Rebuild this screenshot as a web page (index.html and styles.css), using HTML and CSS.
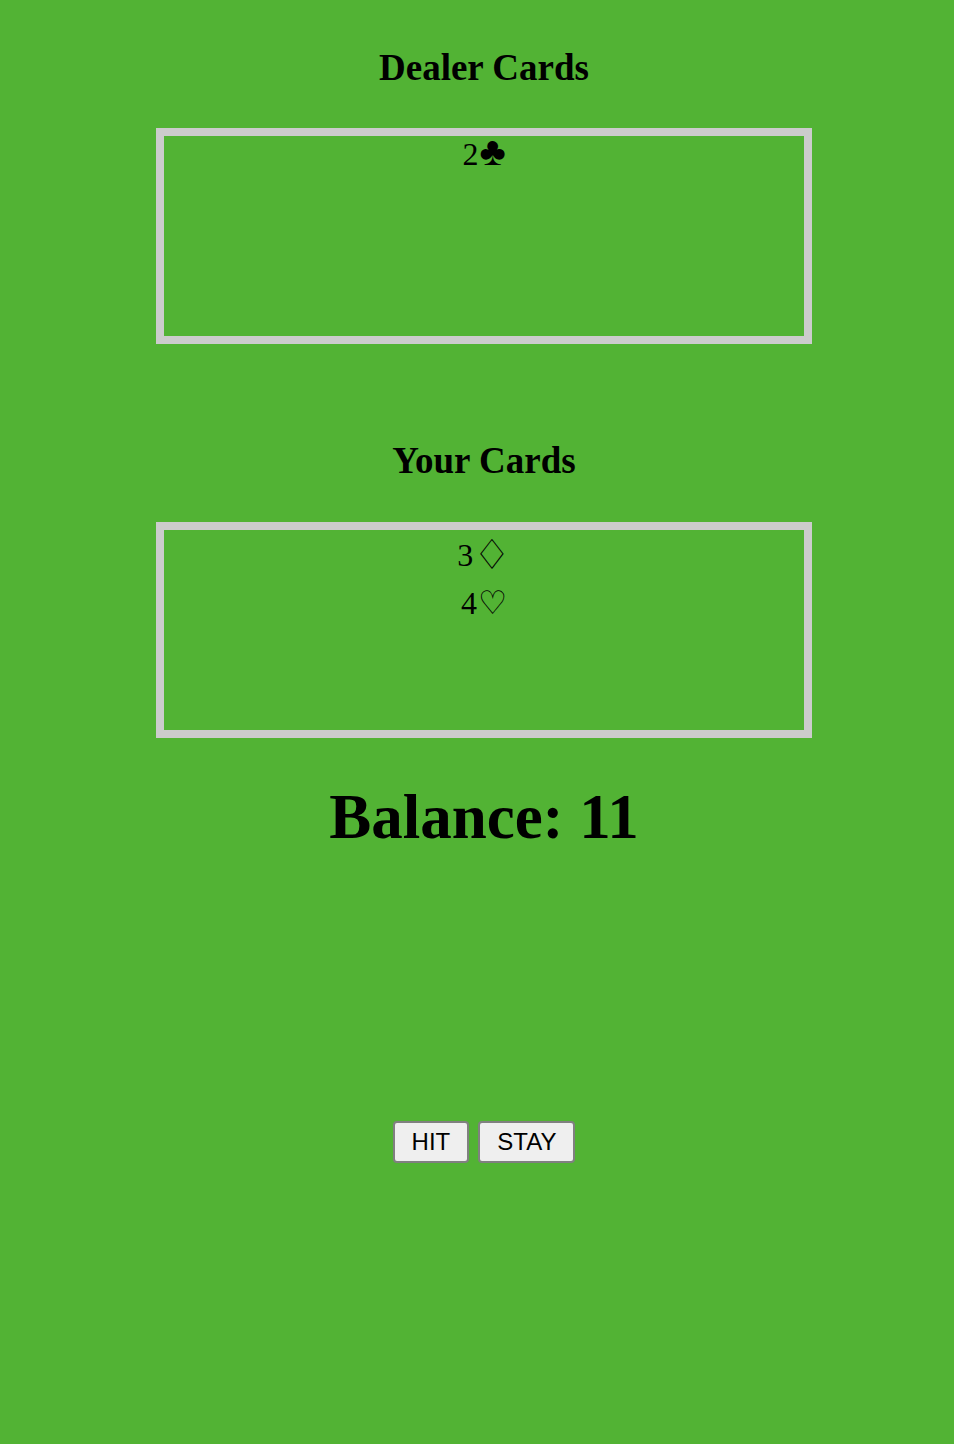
FILE: index.html
```
<!DOCTYPE html>
<html lang="en">
<head>
<meta charset="utf-8">
<title>Blackjack</title>
<link rel="stylesheet" href="styles.css">
</head>
<body>
<main class="table">
  <h2 class="title">Dealer Cards</h2>
  <div class="hand">
    <div class="card">2<span class="suit suit-club">♣</span></div>
  </div>
  <h2 class="title title-player">Your Cards</h2>
  <div class="hand hand-player">
    <div class="card">3<span class="suit suit-diamond">♢</span></div>
    <div class="card">4<span class="suit suit-heart">♡</span></div>
  </div>
  <h1 class="balance">Balance: 11</h1>
  <div class="controls">
    <button class="btn" type="button">HIT</button>
    <button class="btn" type="button">STAY</button>
  </div>
</main>
</body>
</html>
```
FILE: styles.css
```
html, body {
  margin: 0;
  padding: 0;
  background: #52b334;
}

body {
  min-height: 1444px;
  font-family: "Liberation Serif", "DejaVu Serif", serif;
  color: #000;
}

.table {
  padding: 48px 0 0 14px;
  text-align: center;
}

.title {
  margin: 0 0 40px;
  font-size: 37px;
  line-height: 40px;
  font-weight: bold;
}

.title-player {
  margin-bottom: 41px;
}

.hand {
  box-sizing: border-box;
  width: 656px;
  height: 216px;
  margin: 0 auto 97px;
  border: 8px solid #cccccc;
}

.hand-player {
  margin-bottom: 44px;
  padding-top: 7px;
}

.card {
  font-size: 32px;
  line-height: 37px;
  margin-bottom: 11px;
}

.suit {
  display: inline-block;
  line-height: 0;
  margin-left: 1px;
}

.suit-club {
  font-size: 1.25em;
}

.suit-diamond {
  font-family: "DejaVu Sans", sans-serif;
  font-size: 1.3em;
  margin-left: 0;
  vertical-align: -3px;
}

.suit-heart {
  font-family: "DejaVu Sans", sans-serif;
  font-size: 1.02em;
}

.balance {
  margin: 0 0 269px;
  font-size: 63px;
  line-height: 70px;
  font-weight: bold;
}

.controls {
  display: flex;
  justify-content: center;
  gap: 9px;
}

.btn {
  box-sizing: border-box;
  height: 42px;
  padding: 0 17px;
  font-family: "Liberation Sans", Arial, sans-serif;
  font-size: 24px;
  line-height: 28px;
  color: #000;
  background: #efefef;
  border: 2px solid #808080;
  border-radius: 4px;
}
```
